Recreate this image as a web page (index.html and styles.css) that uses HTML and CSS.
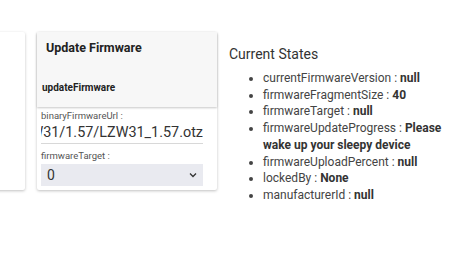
FILE: index.html
```html
<!DOCTYPE html>
<html>
<head>
<meta charset="utf-8">
<link rel="stylesheet" href="styles.css">
</head>
<body>
<div class="page">
  <div class="cards">
    <div class="card card-empty"></div>
    <div class="card">
      <div class="card-head">
        <div class="card-title">Update Firmware</div>
        <div class="card-cmd">updateFirmware</div>
      </div>
      <div class="card-body">
        <div class="field-label">binaryFirmwareUrl :</div>
        <div class="text-input"><span>LZW31/1.57/LZW31_1.57.otz</span></div>
        <div class="field-label">firmwareTarget :</div>
        <div class="select">
          <span>0</span>
          <svg class="chev" width="8" height="6" viewBox="0 0 8 6"><path d="M1 1.5 L4 4.5 L7 1.5" fill="none" stroke="#333" stroke-width="1.3"/></svg>
        </div>
      </div>
    </div>
  </div>
  <div class="states">
    <div class="states-title">Current States</div>
    <ul class="states-list">
      <li>currentFirmwareVersion : <b>null</b></li>
      <li>firmwareFragmentSize : <b>40</b></li>
      <li>firmwareTarget : <b>null</b></li>
      <li>firmwareUpdateProgress : <b>Please wake up your sleepy device</b></li>
      <li>firmwareUploadPercent : <b>null</b></li>
      <li>lockedBy : <b>None</b></li>
      <li>manufacturerId : <b>null</b></li>
    </ul>
  </div>
</div>
</body>
</html>
```

FILE: styles.css
```css
html, body {
  margin: 0;
  padding: 0;
  background: #fff;
  font-family: Roboto, "Liberation Sans", Arial, sans-serif;
  color: #333;
  overflow: hidden;
}
.page {
  display: flex;
  align-items: flex-start;
  width: 474px;
  height: 254px;
}
.cards {
  display: flex;
  gap: 12px;
  margin-left: -155px;
  margin-top: 32px;
}
.card {
  width: 180px;
  height: 158px;
  background: #fff;
  box-shadow: 0 1px 3px rgba(0, 0, 0, 0.25);
  border-radius: 2px;
  display: flex;
  flex-direction: column;
}
.card-head {
  height: 75px;
  background: #f7f7f7;
  box-shadow: 0 1px 2px rgba(0, 0, 0, 0.22);
  padding: 9px 0 0 9px;
  box-sizing: border-box;
}
.card-title {
  font-size: 12.5px;
  font-weight: 700;
  color: #222;
  line-height: 14px;
}
.card-cmd {
  font-size: 10px;
  font-weight: 700;
  color: #222;
  margin-top: 27px;
  margin-left: -4px;
  line-height: 12px;
}
.card-body {
  padding: 3px 14px 0 4px;
}
.field-label {
  font-size: 9.5px;
  color: #555;
  line-height: 12px;
}
.text-input {
  display: flex;
  justify-content: flex-end;
  overflow: hidden;
  white-space: nowrap;
  font-size: 14.4px;
  color: #333;
  line-height: 20px;
  margin-top: 1px;
  border-bottom: 1px solid #d8d8d8;
  margin-bottom: 6px;
}
.text-input span {
  flex: none;
}
.select {
  margin-top: 2px;
  height: 22px;
  background: #e9eaf0;
  display: flex;
  align-items: center;
  justify-content: space-between;
  padding: 0 6px 0 6px;
  font-size: 14px;
  color: #333;
}
.chev {
  display: block;
}
.states {
  margin-left: 12px;
  margin-top: 46px;
  width: 230px;
}
.states-title {
  font-size: 14px;
  color: #333;
  line-height: 17px;
}
.states-list {
  margin: 7px 0 0 0;
  padding-left: 34px;
  font-size: 12px;
  line-height: 16.7px;
  color: #444;
}
.states-list b {
  color: #333;
}
```
